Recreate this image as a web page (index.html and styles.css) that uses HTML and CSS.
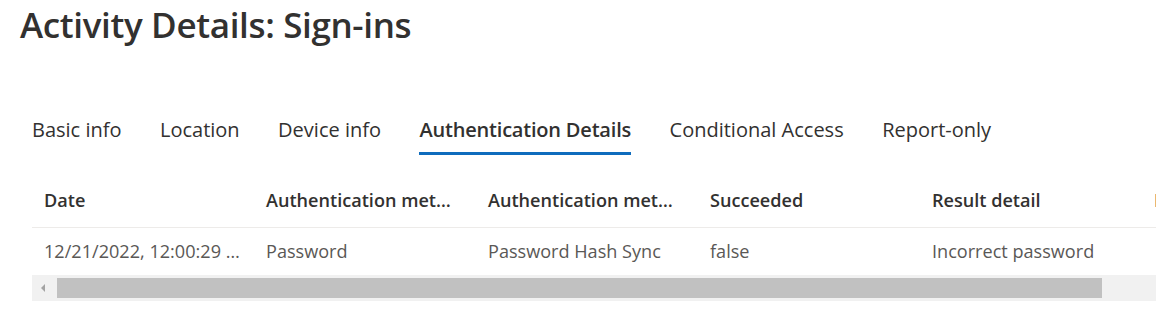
FILE: index.html
```html
<!DOCTYPE html>
<html lang="en">
<head>
<meta charset="utf-8">
<title>Activity Details: Sign-ins</title>
<link rel="stylesheet" href="styles.css">
</head>
<body>
<main class="page">
  <h1 class="title">Activity Details: Sign-ins</h1>
  <nav class="tabs" role="tablist">
    <span class="tab">Basic info</span>
    <span class="tab">Location</span>
    <span class="tab">Device info</span>
    <span class="tab tab-active">Authentication Details</span>
    <span class="tab">Conditional Access</span>
    <span class="tab">Report-only</span>
  </nav>
  <div class="grid">
    <div class="grid-viewport">
      <table class="grid-table">
        <colgroup>
          <col class="col"><col class="col"><col class="col"><col class="col"><col class="col"><col class="col">
        </colgroup>
        <thead>
          <tr>
            <th>Date</th>
            <th>Authentication method</th>
            <th>Authentication method detail</th>
            <th>Succeeded</th>
            <th>Result detail</th>
            <th>Requirement</th>
          </tr>
        </thead>
        <tbody>
          <tr>
            <td>12/21/2022, 12:00:29 PM</td>
            <td>Password</td>
            <td>Password Hash Sync</td>
            <td>false</td>
            <td>Incorrect password</td>
            <td></td>
          </tr>
        </tbody>
      </table>
    </div>
    <div class="hscroll">
      <span class="hscroll-arrow"></span>
      <span class="hscroll-thumb"></span>
    </div>
  </div>
</main>
</body>
</html>
```

FILE: styles.css
```css
html, body {
  margin: 0;
  padding: 0;
  background: #ffffff;
}

body {
  font-family: "Open Sans", "Noto Sans", "Liberation Sans", sans-serif;
  color: #323130;
  width: 1156px;
  overflow: hidden;
}

.title {
  margin: 0;
  padding-left: 20px;
  font-size: 35px;
  letter-spacing: -0.35px;
  font-weight: 600;
  line-height: 50px;
  color: #323130;
}

.tabs {
  display: flex;
  gap: 38.5px;
  margin-top: 66px;
  padding-left: 32px;
}

.tab {
  font-size: 20px;
  line-height: 28px;
  padding-bottom: 8px;
  border-bottom: 3px solid transparent;
  white-space: nowrap;
  color: #323130;
}

.tab-active {
  font-weight: 600;
  letter-spacing: -0.2px;
  border-bottom-color: #0f6cbd;
}

.grid {
  margin-top: 20px;
  margin-left: 32px;
}

.grid-viewport {
  overflow: hidden;
}

.grid-table {
  table-layout: fixed;
  width: 1332px;
  border-collapse: collapse;
  font-size: 18.1px;
  line-height: 24px;
}

.col {
  width: 222px;
}

.grid-table th,
.grid-table td {
  padding: 0 12px;
  text-align: left;
  white-space: nowrap;
  overflow: hidden;
  text-overflow: ellipsis;
}

.grid-table th {
  font-weight: 600;
  color: #323130;
  padding-top: 13px;
  padding-right: 22px;
  padding-bottom: 15px;
  border-bottom: 1px solid #edebe9;
}

.grid-table td {
  font-weight: 400;
  color: #5a5856;
  padding-top: 11px;
  padding-bottom: 12px;
}

.hscroll {
  display: flex;
  align-items: center;
  height: 26px;
  background: #f1f1f1;
}

.hscroll-arrow {
  width: 0;
  height: 0;
  margin-left: 9px;
  margin-right: 12px;
  border-top: 4.5px solid transparent;
  border-bottom: 4.5px solid transparent;
  border-right: 4px solid #a3a3a3;
}

.hscroll-thumb {
  width: 1045px;
  height: 20px;
  background: #c1c1c1;
}
```
